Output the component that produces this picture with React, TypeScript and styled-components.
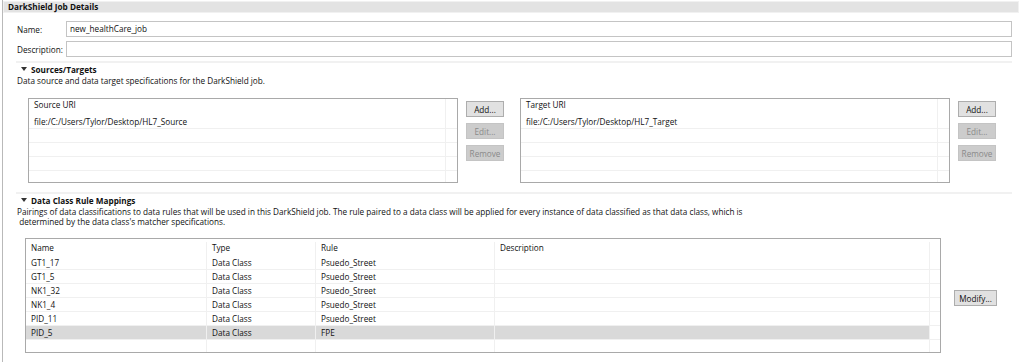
import React from 'react';
import styled, { createGlobalStyle } from 'styled-components';

const GlobalStyle = createGlobalStyle`
  html, body {
    margin: 0;
    padding: 0;
    background: #ffffff;
  }
  body {
    font-family: 'Open Sans', 'Noto Sans', sans-serif;
    font-size: 8.2px;
    color: #111111;
  }
`;

const Page = styled.div`
  width: 1024px;
  height: 362px;
  padding-left: 2px;
  box-sizing: border-box;
  overflow: hidden;
`;

const Frame = styled.div`
  height: 100%;
  border-left: 1px solid #b9b9b9;
  padding: 2px 0 0 1px;
  box-sizing: border-box;
`;

const TitleBar = styled.div`
  width: 1014px;
  height: 10px;
  line-height: 10px;
  background: #e3e3e3;
  box-shadow: 0 0 0 1px #f1f1f1;
  font-weight: 700;
  padding-left: 4px;
  box-sizing: border-box;
`;

const Fields = styled.div`
  display: flex;
  flex-direction: column;
  gap: 4px;
  padding: 9px 0 0 13px;
`;

const FieldRow = styled.div`
  display: flex;
  align-items: center;
`;

const Label = styled.label`
  width: 49px;
  flex: none;
`;

const TextInput = styled.div`
  width: 946px;
  height: 16px;
  line-height: 14px;
  border: 1px solid #c4c4c4;
  box-sizing: border-box;
  padding-left: 3px;
`;

const Section = styled.section<{ $top: number }>`
  margin: ${({ $top }) => $top}px 0 0 12px;
  width: 996px;
  border-top: 2px solid #f1f1f1;
`;

const SectionTitle = styled.div`
  display: flex;
  align-items: center;
  gap: 4px;
  height: 10px;
  margin-top: 1px;
  padding-left: 5px;
  font-weight: 700;
`;

const Caret = styled.svg`
  width: 6px;
  height: 4px;
`;

const SectionText = styled.div`
  padding: 2px 0 0 1px;
  line-height: 10px;
`;

const SourcesRow = styled.div`
  display: flex;
  gap: 16px;
  padding: 12px 0 0 12px;
`;

const ListGroup = styled.div`
  display: flex;
  gap: 8px;
  align-items: flex-start;
`;

const ButtonStack = styled.div`
  display: flex;
  flex-direction: column;
  gap: 6px;
  padding-top: 3px;
`;

const Button = styled.button<{ $w?: number }>`
  width: ${({ $w }) => $w ?? 38}px;
  height: 16px;
  padding: 0;
  font: inherit;
  color: #111111;
  background: #e1e1e1;
  border: 1px solid #adadad;
  box-sizing: border-box;

  &:disabled {
    color: #8a8a8a;
    background: #cccccc;
    border-color: #c4c4c4;
  }
`;

const TableBox = styled.div<{ $w: number; $h: number }>`
  width: ${({ $w }) => $w}px;
  height: ${({ $h }) => $h}px;
  border: 1px solid #a9a9a9;
  box-sizing: border-box;
  overflow: hidden;
`;

const GridRow = styled.div<{ $cols: string }>`
  display: grid;
  grid-template-columns: ${({ $cols }) => $cols};
  height: 13px;
  border-bottom: 1px solid #f0f0f0;
`;

const HeaderRow = styled.div<{ $cols: string; $h: number; $pad: number }>`
  display: grid;
  grid-template-columns: ${({ $cols }) => $cols};
  height: ${({ $h }) => $h}px;
  box-sizing: border-box;
  padding-top: ${({ $pad }) => $pad}px;
`;

const Cell = styled.div<{ $selected?: boolean }>`
  padding-left: 5px;
  line-height: 13px;
  white-space: nowrap;
  overflow: hidden;
  background: ${({ $selected }) => ($selected ? '#d9d9d9' : 'transparent')};
  & + & {
    border-left: 1px solid #f0f0f0;
  }
`;

const HeadCell = styled(Cell)`
  line-height: 12px;
`;

const MappingRow = styled.div`
  display: flex;
  align-items: center;
  gap: 13px;
  padding: 11px 0 0 9px;
`;

const ModifyWrap = styled.div`
  padding-top: 5px;
`;

const CaretIcon = () => (
  <Caret viewBox="0 0 6 4">
    <path d="M0 0 H6 L3 4 Z" fill="#333" />
  </Caret>
);

const uriCols = '416px 1fr';

const UriList = ({ title, uri }: { title: string; uri: string }) => (
  <ListGroup>
    <TableBox $w={430} $h={85}>
      <HeaderRow $cols={uriCols} $h={16} $pad={0}>
        <HeadCell>{title}</HeadCell>
        <HeadCell />
      </HeaderRow>
      {[uri, '', '', '', ''].map((v, i) => (
        <GridRow key={i} $cols={uriCols}>
          <Cell>{v}</Cell>
          <Cell />
        </GridRow>
      ))}
    </TableBox>
    <ButtonStack>
      <Button>Add...</Button>
      <Button disabled>Edit...</Button>
      <Button disabled>Remove</Button>
    </ButtonStack>
  </ListGroup>
);

const mapCols = '180px 109px 179px 435px 1fr';

const mappings = [
  { name: 'GT1_17', type: 'Data Class', rule: 'Psuedo_Street' },
  { name: 'GT1_5', type: 'Data Class', rule: 'Psuedo_Street' },
  { name: 'NK1_32', type: 'Data Class', rule: 'Psuedo_Street' },
  { name: 'NK1_4', type: 'Data Class', rule: 'Psuedo_Street' },
  { name: 'PID_11', type: 'Data Class', rule: 'Psuedo_Street' },
  { name: 'PID_5', type: 'Data Class', rule: 'FPE', selected: true },
  { name: '', type: '', rule: '' },
];

export default function App() {
  return (
    <Page>
      <GlobalStyle />
      <Frame>
        <TitleBar>DarkShield Job Details</TitleBar>
        <Fields>
          <FieldRow>
            <Label>Name:</Label>
            <TextInput>new_healthCare_job</TextInput>
          </FieldRow>
          <FieldRow>
            <Label>Description:</Label>
            <TextInput />
          </FieldRow>
        </Fields>

        <Section $top={4}>
          <SectionTitle>
            <CaretIcon />
            Sources/Targets
          </SectionTitle>
          <SectionText>Data source and data target specifications for the DarkShield job.</SectionText>
          <SourcesRow>
            <UriList title="Source URI" uri="file:/C:/Users/Tylor/Desktop/HL7_Source" />
            <UriList title="Target URI" uri="file:/C:/Users/Tylor/Desktop/HL7_Target" />
          </SourcesRow>
        </Section>

        <Section $top={9}>
          <SectionTitle>
            <CaretIcon />
            Data Class Rule Mappings
          </SectionTitle>
          <SectionText>
            Pairings of data classifications to data rules that will be used in this DarkShield job. The rule paired to a
            data class will be applied for every instance of data classified as that data class, which is
            <br />
            &nbsp;determined by the data class's matcher specifications.
          </SectionText>
          <MappingRow>
            <TableBox $w={916} $h={115}>
              <HeaderRow $cols={mapCols} $h={17} $pad={3}>
                <HeadCell>Name</HeadCell>
                <HeadCell>Type</HeadCell>
                <HeadCell>Rule</HeadCell>
                <HeadCell>Description</HeadCell>
                <HeadCell />
              </HeaderRow>
              {mappings.map((m, i) => (
                <GridRow key={i} $cols={mapCols}>
                  <Cell $selected={m.selected}>{m.name}</Cell>
                  <Cell $selected={m.selected}>{m.type}</Cell>
                  <Cell $selected={m.selected}>{m.rule}</Cell>
                  <Cell $selected={m.selected} />
                  <Cell />
                </GridRow>
              ))}
            </TableBox>
            <ModifyWrap>
              <Button $w={43}>Modify...</Button>
            </ModifyWrap>
          </MappingRow>
        </Section>
      </Frame>
    </Page>
  );
}
